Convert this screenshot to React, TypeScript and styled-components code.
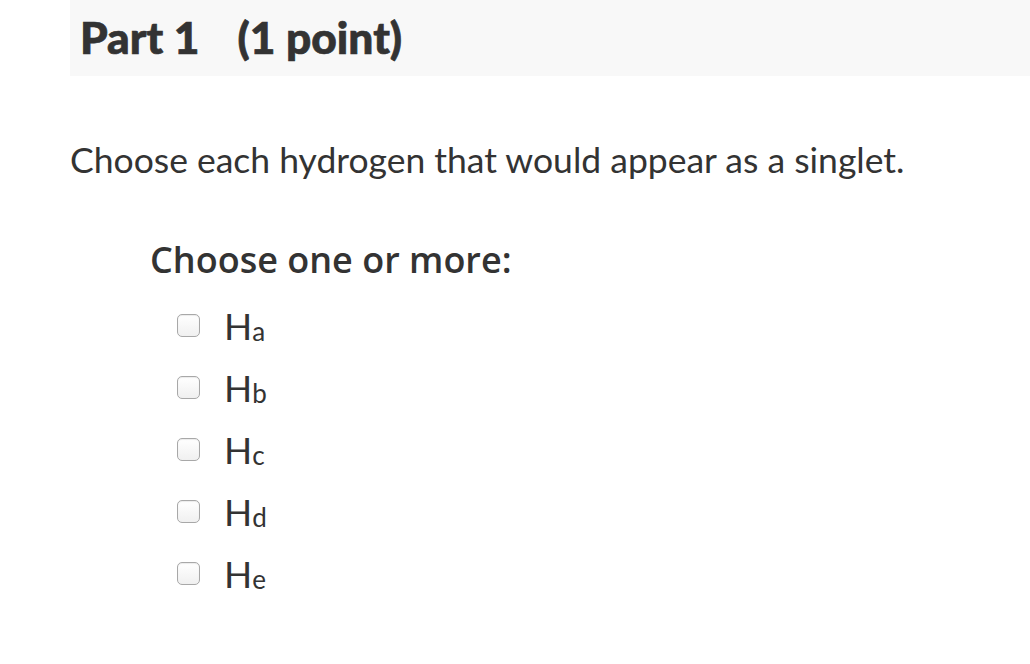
import styled, { createGlobalStyle } from "styled-components";

const GlobalStyle = createGlobalStyle`
  body {
    margin: 0;
    background: #ffffff;
    font-family: Lato, "Liberation Sans", sans-serif;
    color: #333333;
  }
`;

const Page = styled.div`
  padding-left: 70px;
  width: 960px;
`;

const Header = styled.div`
  background: #f8f8f8;
  height: 76px;
  display: flex;
  align-items: center;
  padding-left: 10px;
  gap: 38px;
`;

const Title = styled.span`
  font-family: Lato, sans-serif;
  font-weight: 900;
  font-size: 44.3px;
  color: #333333;
  -webkit-text-stroke: 0.7px #333333;
  margin-top: -3px;
`;

const Question = styled.p`
  margin: 62px 0 0;
  font-size: 35.5px;
  line-height: 44px;
  color: #333333;
`;

const Answers = styled.div`
  margin: 54px 0 0 80px;
`;

const Prompt = styled.div`
  font-family: "Open Sans", sans-serif;
  font-weight: 600;
  font-size: 36px;
  line-height: 48px;
  color: #333333;
  margin-bottom: 10px;
`;

const Option = styled.label`
  display: flex;
  align-items: center;
  gap: 24px;
  height: 62px;
  padding-left: 27px;
`;

const Box = styled.span`
  width: 21px;
  height: 21px;
  border: 1px solid #a8a8a8;
  border-radius: 5px;
  background: linear-gradient(#ffffff, #f0f0f0);
  box-shadow: inset 0 1px 1px rgba(0, 0, 0, 0.08);
`;

const Label = styled.span`
  font-size: 37px;
  color: #333333;
`;

const Sub = styled.span`
  font-size: 26px;
  position: relative;
  top: 1px;
`;

const options = ["a", "b", "c", "d", "e"];

export default function App() {
  return (
    <>
      <GlobalStyle />
      <Page>
        <Header>
          <Title>Part 1</Title>
          <Title>(1 point)</Title>
        </Header>
        <Question>Choose each hydrogen that would appear as a singlet.</Question>
        <Answers>
          <Prompt>Choose one or more:</Prompt>
          {options.map((o) => (
            <Option key={o}>
              <Box />
              <Label>
                H<Sub>{o}</Sub>
              </Label>
            </Option>
          ))}
        </Answers>
      </Page>
    </>
  );
}
